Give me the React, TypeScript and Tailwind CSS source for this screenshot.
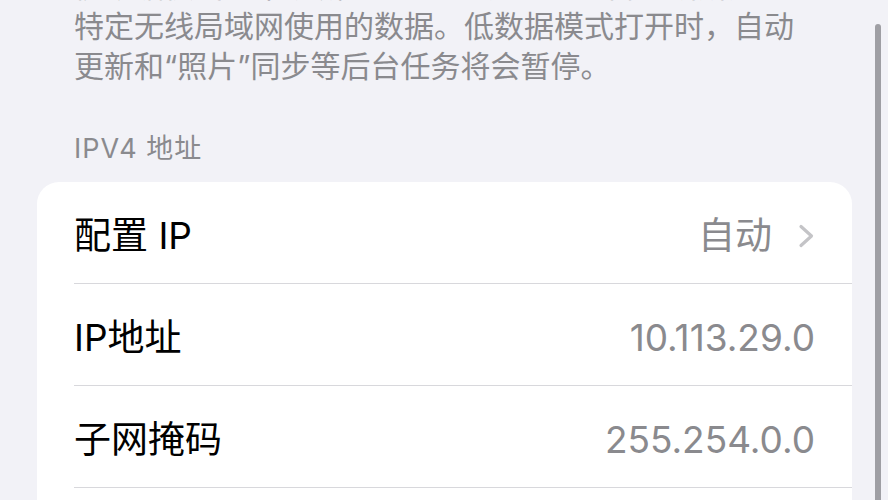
import React from "react";

const font = {
  fontFamily: '"Inter", "Noto Sans CJK SC", sans-serif',
};

function Chevron() {
  return (
    <svg width="18" height="24" viewBox="0 0 18 24" fill="none">
      <path
        d="M4 2.5 L14.5 12 L4 21.5"
        stroke="#c4c4c7"
        strokeWidth="3.2"
        strokeLinecap="round"
        strokeLinejoin="round"
      />
    </svg>
  );
}

function Row({ label, value, chevron }: { label: string; value: string; chevron?: boolean }) {
  return (
    <div className="pl-[37px]">
      <div className="h-[102px] pt-[6px] flex items-center justify-between pr-[37px] border-b border-[#d8d8dc]">
        <span className="text-[37px] text-black leading-none">{label}</span>
        <div className="flex items-center gap-[25px]">
          <span className="text-[37px] text-[#8a8a8e] leading-none">{value}</span>
          {chevron && <Chevron />}
        </div>
      </div>
    </div>
  );
}

export default function App() {
  return (
    <div className="w-[888px] h-[500px] overflow-hidden bg-[#f2f2f7] relative" style={font}>
      <div className="mt-[-34px] pl-[74px] text-[30px] leading-[40px] text-[#8a8a8e] whitespace-nowrap">
        <div>低数据模式可帮助减少 iPhone 通过蜂窝网络或所选</div>
        <div>特定无线局域网使用的数据。低数据模式打开时，自动</div>
        <div>更新和“照片”同步等后台任务将会暂停。</div>
      </div>
      <div className="mt-[45px] pl-[74px] text-[27px] leading-[36px] tracking-[1px] text-[#8a8a8e]">
        IPV4 地址
      </div>
      <div className="mt-[15px] ml-[37px] w-[815px] rounded-[22px] bg-white pb-[40px]">
        <Row label="配置 IP" value="自动" chevron />
        <Row label="IP地址" value="10.113.29.0" />
        <Row label="子网掩码" value="255.254.0.0" />
      </div>
      <div className="absolute right-[7px] top-[24px] bottom-[-20px] w-[6px] rounded-full bg-[#9f9fa4]" />
    </div>
  );
}
